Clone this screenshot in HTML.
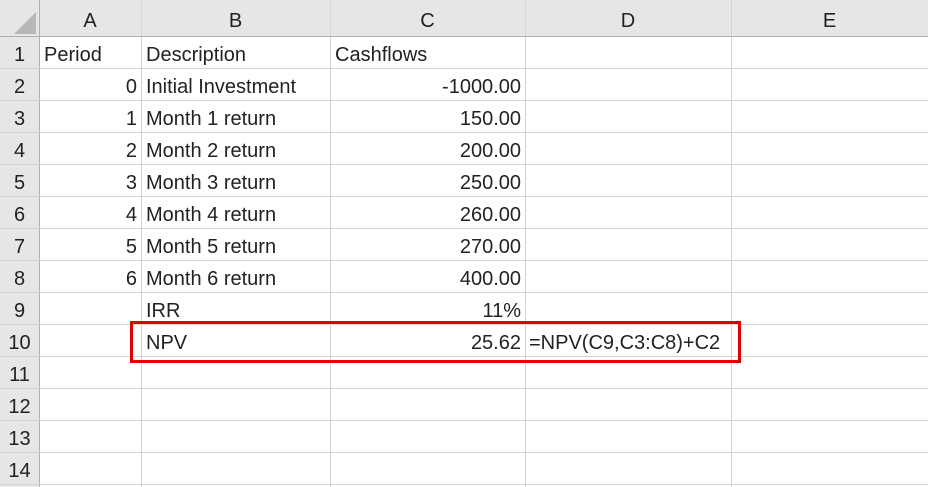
<!DOCTYPE html><html><head><style>
body{margin:0;width:928px;height:487px;overflow:hidden;background:#fff;font-family:"Liberation Sans",sans-serif;font-size:20px;color:#222;position:relative}
.h{position:absolute;background:#e6e6e6;}
.v{position:absolute;width:1px;background:#d4d4d4;top:0;height:487px}
.hl{position:absolute;height:1px;background:#d4d4d4;left:0;width:928px}
.t{position:absolute;line-height:32px;white-space:nowrap;margin-top:3px}
.r{text-align:right}
.c{text-align:center}
</style></head><body>
<div class="h" style="left:0;top:0;width:928px;height:36px"></div>
<div class="h" style="left:0;top:0;width:39px;height:487px"></div>
<svg style="position:absolute;left:14px;top:12px" width="22" height="22"><polygon points="22,0 22,22 0,22" fill="#b8b8b8"/></svg>
<div class="v" style="left:39px;background:#b0b0b0"></div>
<div class="v" style="left:141px"></div>
<div class="v" style="left:330px"></div>
<div class="v" style="left:525px"></div>
<div class="v" style="left:731px"></div>
<div class="hl" style="top:36px;background:#b0b0b0"></div>
<div id="rows"></div>
<div class="t c" style="left:39px;width:102px;top:4px;margin-top:1px">A</div>
<div class="t c" style="left:141px;width:189px;top:4px;margin-top:1px">B</div>
<div class="t c" style="left:330px;width:195px;top:4px;margin-top:1px">C</div>
<div class="t c" style="left:525px;width:206px;top:4px;margin-top:1px">D</div>
<div class="t c" style="left:731px;width:197px;top:4px;margin-top:1px">E</div>
<script>
var s='';for(var i=1;i<=14;i++){var y=36+(i-1)*32;s+='<div class="hl" style="top:'+(y+32)+'px"></div><div class="t c" style="left:0;width:39px;top:'+y+'px">'+i+'</div>';}
document.getElementById('rows').innerHTML=s;
</script>
<div class="t" style="left:44px;top:36px">Period</div>
<div class="t" style="left:146px;top:36px">Description</div>
<div class="t" style="left:335px;top:36px">Cashflows</div>
<div class="t r" style="left:44px;width:93px;top:68px">0</div>
<div class="t r" style="left:44px;width:93px;top:100px">1</div>
<div class="t r" style="left:44px;width:93px;top:132px">2</div>
<div class="t r" style="left:44px;width:93px;top:164px">3</div>
<div class="t r" style="left:44px;width:93px;top:196px">4</div>
<div class="t r" style="left:44px;width:93px;top:228px">5</div>
<div class="t r" style="left:44px;width:93px;top:260px">6</div>
<div class="t" style="left:146px;top:68px">Initial Investment</div>
<div class="t" style="left:146px;top:100px">Month 1 return</div>
<div class="t" style="left:146px;top:132px">Month 2 return</div>
<div class="t" style="left:146px;top:164px">Month 3 return</div>
<div class="t" style="left:146px;top:196px">Month 4 return</div>
<div class="t" style="left:146px;top:228px">Month 5 return</div>
<div class="t" style="left:146px;top:260px">Month 6 return</div>
<div class="t" style="left:146px;top:292px">IRR</div>
<div class="t" style="left:146px;top:324px">NPV</div>
<div class="t r" style="left:330px;width:191px;top:68px">-1000.00</div>
<div class="t r" style="left:330px;width:191px;top:100px">150.00</div>
<div class="t r" style="left:330px;width:191px;top:132px">200.00</div>
<div class="t r" style="left:330px;width:191px;top:164px">250.00</div>
<div class="t r" style="left:330px;width:191px;top:196px">260.00</div>
<div class="t r" style="left:330px;width:191px;top:228px">270.00</div>
<div class="t r" style="left:330px;width:191px;top:260px">400.00</div>
<div class="t r" style="left:330px;width:191px;top:292px">11%</div>
<div class="t r" style="left:330px;width:191px;top:324px">25.62</div>
<div class="t" style="left:529px;top:324px">=NPV(C9,C3:C8)+C2</div>
<div style="position:absolute;left:130px;top:321px;width:605px;height:36px;border:3px solid #e00000"></div>
</body></html>
